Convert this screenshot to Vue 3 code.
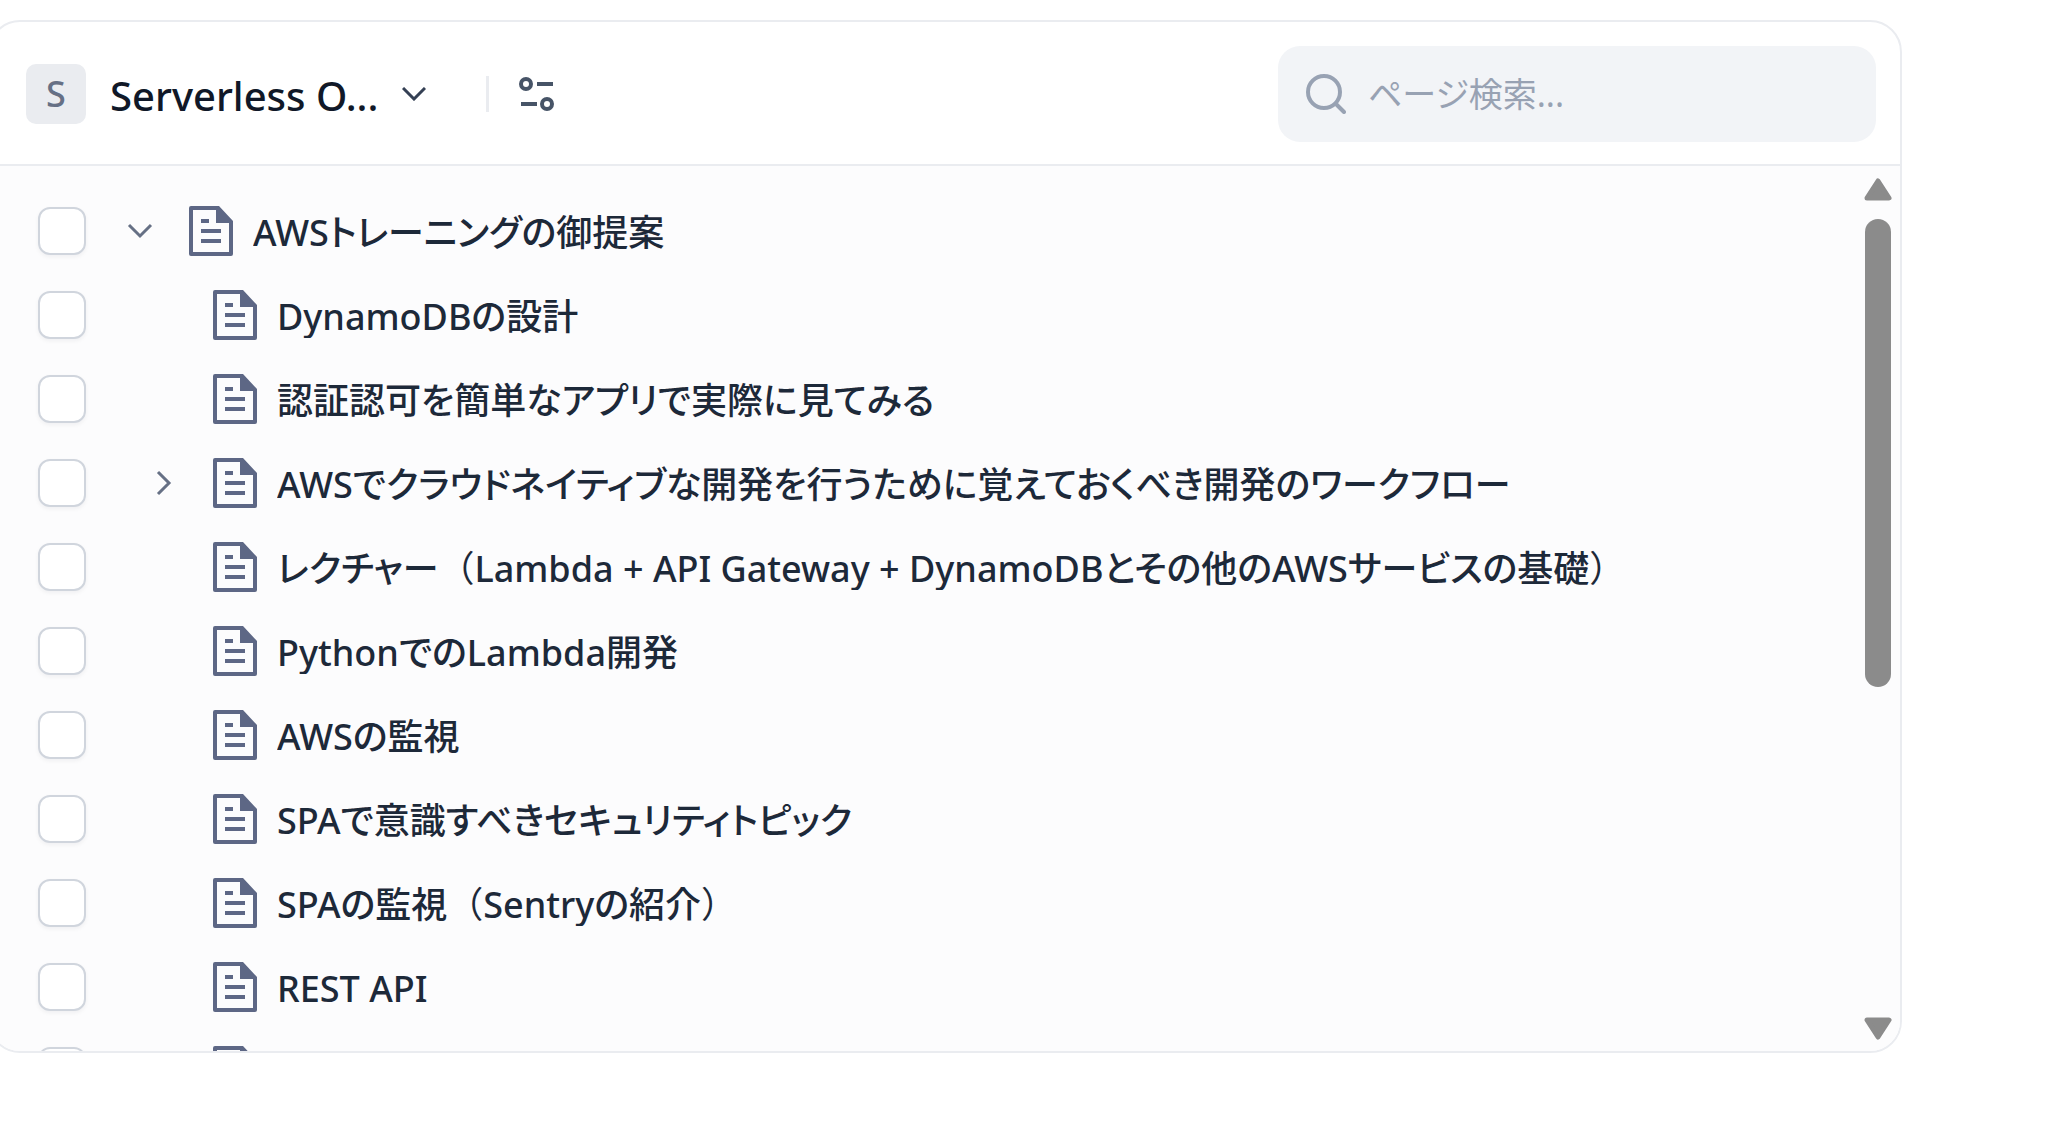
<template>
  <div class="page">
    <section class="selector">
      <header class="toolbar">
        <button class="workspace" type="button">
          <span class="badge">S</span>
          <span class="workspace-name">Serverless O...</span>
          <svg class="workspace-arrow" viewBox="0 0 24 14" aria-hidden="true">
            <path d="M1 1L12 12L23 1" />
          </svg>
        </button>
        <span class="divider"></span>
        <button class="settings" type="button" aria-label="設定">
          <svg viewBox="0 0 36 34" aria-hidden="true">
            <circle cx="7" cy="7" r="5" />
            <path d="M18 7H34M2 27H18" />
            <circle cx="28" cy="27" r="5" />
          </svg>
        </button>
        <label class="search">
          <svg viewBox="0 0 40 40" aria-hidden="true">
            <circle cx="18" cy="18" r="16" />
            <path d="M30 30L38 38" />
          </svg>
          <input v-model="keyword" type="text" placeholder="ページ検索..." aria-label="ページ検索" />
        </label>
      </header>

      <div class="body">
        <ul class="tree">
          <li v-for="page in pages" :key="page.id" class="row" :class="{ child: page.depth > 0 }">
            <input :id="page.id" v-model="checked" class="check" type="checkbox" :value="page.id" />
            <span class="toggle">
              <button v-if="page.state" type="button" :aria-label="page.name">
                <svg v-if="page.state === 'open'" class="arrow-down" viewBox="0 0 26 16" aria-hidden="true">
                  <path d="M2 2L13 13L24 2" />
                </svg>
                <svg v-else class="arrow-right" viewBox="0 0 16 26" aria-hidden="true">
                  <path d="M2 2L13 13L2 24" />
                </svg>
              </button>
            </span>
            <svg class="doc" viewBox="0 0 44 50" aria-hidden="true">
              <path
                fill-rule="evenodd"
                d="M2 0H30L44 15V48a2 2 0 0 1-2 2H2a2 2 0 0 1-2-2V2a2 2 0 0 1 2-2ZM4 4V46H40V17H27V4Z"
              />
              <path d="M12 13H20V17H12ZM12 23H32V27H12ZM12 33H32V37H12Z" />
            </svg>
            <label class="name" :for="page.id">
              <span v-for="(part, i) in splitParens(page.name)" :key="i" :class="{ paren: isParen(part) }">{{ part }}</span>
            </label>
          </li>
        </ul>
        <div class="scrollbar">
          <button type="button" aria-label="上へ">
            <svg viewBox="0 0 30 24" aria-hidden="true"><path d="M15 4L26 21H4Z" /></svg>
          </button>
          <div class="track"><div class="thumb"></div></div>
          <button type="button" aria-label="下へ">
            <svg viewBox="0 0 30 24" aria-hidden="true"><path d="M15 20L26 3H4Z" /></svg>
          </button>
        </div>
      </div>
    </section>
  </div>
</template>

<script setup>
import { ref } from 'vue';

const keyword = ref('');
const checked = ref([]);

const pages = [
  { id: 'p1', depth: 0, state: 'open', name: 'AWSトレーニングの御提案' },
  { id: 'p2', depth: 1, name: 'DynamoDBの設計' },
  { id: 'p3', depth: 1, name: '認証認可を簡単なアプリで実際に見てみる' },
  { id: 'p4', depth: 1, state: 'closed', name: 'AWSでクラウドネイティブな開発を行うために覚えておくべき開発のワークフロー' },
  { id: 'p5', depth: 1, name: 'レクチャー（Lambda + API Gateway + DynamoDBとその他のAWSサービスの基礎）' },
  { id: 'p6', depth: 1, name: 'PythonでのLambda開発' },
  { id: 'p7', depth: 1, name: 'AWSの監視' },
  { id: 'p8', depth: 1, name: 'SPAで意識すべきセキュリティトピック' },
  { id: 'p9', depth: 1, name: 'SPAの監視（Sentryの紹介）' },
  { id: 'p10', depth: 1, name: 'REST API' },
  { id: 'p11', depth: 1, name: 'DynamoDBのデータ' }
];

// 全角括弧だけは詰めずに表示する
const isParen = (text) => text === '（' || text === '）';
const splitParens = (text) => text.split(/([（）])/).filter(Boolean);
</script>

<style>
body {
  background: #fff;
}
</style>

<style scoped>
.page {
  box-sizing: border-box;
  height: 100vh;
  padding: 20px 146px 72px 0;
  overflow: hidden;
  font-family: 'Noto Sans', 'Noto Sans CJK JP', sans-serif;
  font-feature-settings: 'palt';
}

button {
  padding: 0;
  border: 0;
  background: none;
  color: inherit;
  font: inherit;
  cursor: pointer;
}

svg {
  display: block;
  flex: none;
}

.selector {
  box-sizing: border-box;
  display: flex;
  flex-direction: column;
  height: 100%;
  margin-left: -12px;
  border: 2px solid #eaecf0;
  border-radius: 32px;
  background: #fff;
  overflow: hidden;
}

.toolbar {
  display: flex;
  align-items: center;
  padding: 24px 24px 22px 36px;
  border-bottom: 2px solid #eaecf0;
}

.workspace {
  display: flex;
  align-items: center;
  color: #101828;
}

.badge {
  width: 60px;
  margin-right: 24px;
  border-radius: 10px;
  background: #eaecf0;
  color: #667085;
  font-size: 36px;
  font-weight: 500;
  line-height: 60px;
}

.workspace-name {
  padding-top: 4px;
  font-size: 40px;
  font-weight: 500;
  line-height: 60px;
}

.workspace-arrow {
  width: 24px;
  margin-left: 24px;
  fill: none;
  stroke: #344054;
  stroke-width: 3;
}

.divider {
  width: 3px;
  height: 36px;
  margin: 0 30px 0 60px;
  background: #eaecf0;
}

.settings svg {
  width: 36px;
  fill: none;
  stroke: #475467;
  stroke-width: 4;
}

.search {
  box-sizing: border-box;
  display: flex;
  align-items: center;
  gap: 22px;
  width: 598px;
  height: 96px;
  margin-left: auto;
  padding: 0 28px;
  border-radius: 22px;
  background: #f2f4f7;
}

.search svg {
  width: 40px;
  fill: none;
  stroke: #98a2b3;
  stroke-width: 4;
  stroke-linecap: round;
}

.search input {
  flex: 1;
  min-width: 0;
  padding: 0;
  border: 0;
  outline: 0;
  background: none;
  color: #101828;
  font-family: inherit;
  font-feature-settings: inherit;
  font-size: 34px;
}

.search input::placeholder {
  color: #98a2b3;
}

.body {
  display: flex;
  flex: 1;
  min-height: 0;
  background: #fcfcfd;
}

.tree {
  flex: 1;
  min-width: 0;
  margin: 0;
  padding: 23px 0 0 48px;
  list-style: none;
  overflow: hidden;
}

.row {
  display: flex;
  align-items: center;
  height: 84px;
}

.check {
  appearance: none;
  box-sizing: border-box;
  flex: none;
  width: 48px;
  height: 48px;
  margin: 0 40px 0 0;
  border: 2px solid #d0d5dd;
  border-radius: 12px;
  background: #fff;
  box-shadow: 0 2px 4px rgba(16, 24, 40, 0.05);
}

.check:checked {
  border-color: #155eef;
  background: #155eef;
}

.toggle {
  width: 63px;
  flex: none;
}

.child .toggle {
  margin-left: 24px;
}

.toggle button {
  display: flex;
  align-items: center;
  justify-content: center;
  width: 27px;
  height: 48px;
}

.toggle svg {
  fill: none;
  stroke: #667085;
  stroke-width: 3;
}

.arrow-down {
  width: 26px;
}

.arrow-right {
  width: 16px;
}

.doc {
  width: 44px;
  fill: #5d6785;
}

.name {
  min-width: 0;
  height: 46px;
  margin-left: 20px;
  color: #1d2939;
  font-size: 36px;
  font-weight: 500;
  line-height: 50px;
  white-space: nowrap;
  overflow: hidden;
}

.paren {
  font-feature-settings: normal;
  font-weight: 400;
}

.scrollbar {
  display: flex;
  flex-direction: column;
  align-items: center;
  gap: 18px;
  padding: 11px 7px 10px 8px;
}

.scrollbar svg {
  width: 30px;
  fill: #8b8b8b;
  stroke: #8b8b8b;
  stroke-width: 5;
  stroke-linejoin: round;
}

.track {
  flex: 1;
  width: 26px;
}

.thumb {
  height: 60%;
  border-radius: 13px;
  background: #8b8b8b;
}
</style>
